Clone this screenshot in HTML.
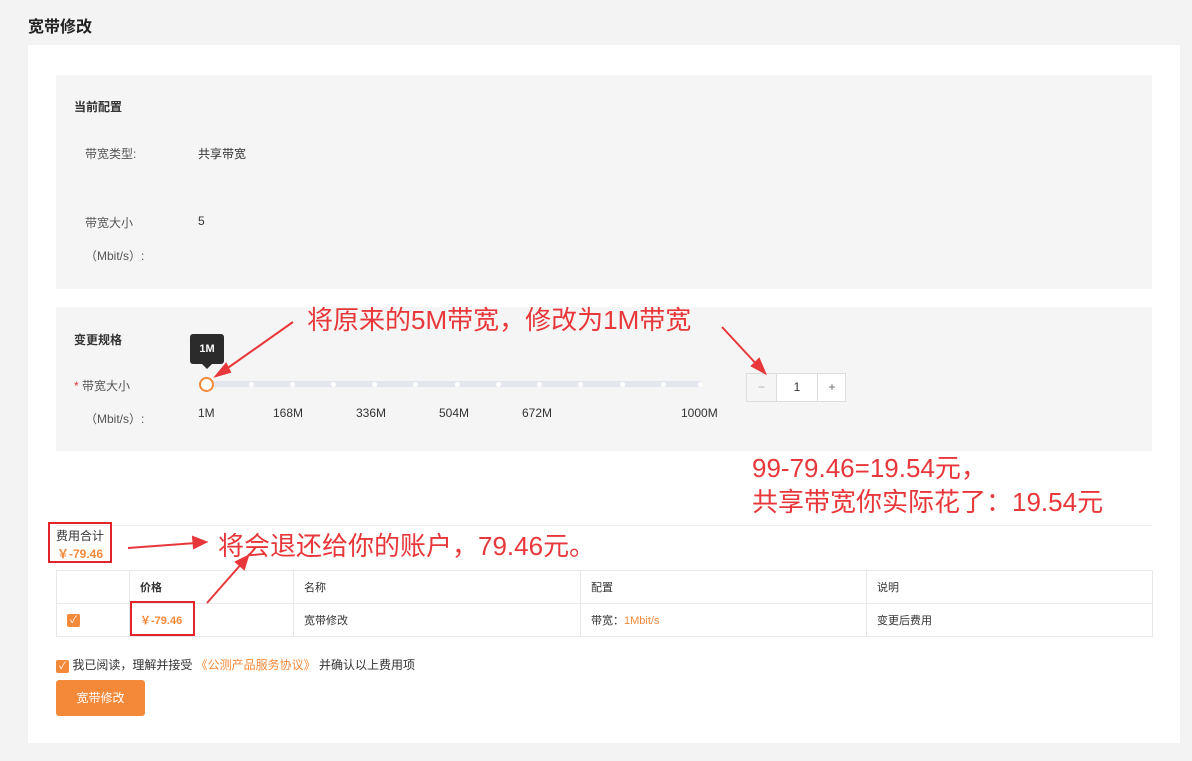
<!DOCTYPE html><html><head><meta charset="utf-8"><style>
body{margin:0;width:1192px;height:761px;background:#f3f3f3;font-family:"Liberation Sans","Noto Sans CJK SC",sans-serif;position:relative;overflow:hidden;color:#333}
.a{position:absolute;white-space:nowrap}
.card{position:absolute;left:28px;top:45px;width:1152px;height:698px;background:#fff}
.panel{position:absolute;left:56px;width:1096px;background:#f5f5f5}
.s{font-size:12px}
.red{color:#e8373a;font-size:26px}
.bx{position:absolute;border:2px solid #e0262b}
.dot{position:absolute;top:382px;width:5px;height:5px;border-radius:50%;background:#fff}
table{position:absolute;left:56px;top:570px;width:1097px;border-collapse:collapse;font-size:11px}
td{border:1px solid #e8e8e8;height:32px;padding:0 10px}
.cb{display:inline-block;width:13px;height:13px;background:#f5893a;border-radius:2px;color:#fff;font-size:10px;line-height:13px;text-align:center}
</style></head><body>
<div class="a" style="left:28px;top:13px;font-size:16px;font-weight:bold;color:#222">宽带修改</div>
<div class="card"></div>
<div class="panel" style="top:75px;height:214px"></div>
<div class="a s" style="left:74px;top:98px;font-weight:bold">当前配置</div>
<div class="a s" style="left:85px;top:145px;color:#555">带宽类型:</div>
<div class="a s" style="left:198px;top:145px">共享带宽</div>
<div class="a s" style="left:85px;top:214px;color:#555">带宽大小</div>
<div class="a s" style="left:198px;top:214px">5</div>
<div class="a s" style="left:85px;top:247px;color:#555">（Mbit/s）:</div>
<div class="panel" style="top:307px;height:144px"></div>
<div class="a s" style="left:74px;top:331px;font-weight:bold">变更规格</div>
<div class="a s" style="left:74px;top:377px;color:#555"><span style="color:#e8373a">*</span> 带宽大小</div>
<div class="a s" style="left:85px;top:410px;color:#555">（Mbit/s）:</div>
<div class="a" style="left:190px;top:334px;width:34px;height:30px;background:#2b2b2b;border-radius:3px;color:#fff;font-size:11px;font-weight:bold;text-align:center;line-height:30px">1M</div>
<div class="a" style="left:202px;top:364px;border:5px solid transparent;border-top-color:#2b2b2b;border-bottom:0"></div>
<div class="a" style="left:206px;top:381px;width:496px;height:6px;background:#e3e6ec;border-radius:3px"></div>
<div class="dot" style="left:249px"></div><div class="dot" style="left:290px"></div><div class="dot" style="left:331px"></div><div class="dot" style="left:372px"></div><div class="dot" style="left:413px"></div><div class="dot" style="left:455px"></div><div class="dot" style="left:496px"></div><div class="dot" style="left:537px"></div><div class="dot" style="left:578px"></div><div class="dot" style="left:620px"></div><div class="dot" style="left:661px"></div><div class="dot" style="left:698px"></div>
<div class="a" style="left:199px;top:377px;width:11px;height:11px;border:2px solid #f5893a;border-radius:50%;background:#fff"></div>
<div class="a s" style="left:198px;top:406px">1M</div>
<div class="a s" style="left:273px;top:406px">168M</div>
<div class="a s" style="left:356px;top:406px">336M</div>
<div class="a s" style="left:439px;top:406px">504M</div>
<div class="a s" style="left:522px;top:406px">672M</div>
<div class="a s" style="left:681px;top:406px">1000M</div>
<div class="a" style="left:746px;top:373px;width:98px;height:27px;border:1px solid #ddd;background:#fff;font-size:12px">
<div class="a" style="left:0;top:0;width:29px;height:27px;background:#f5f5f5;border-right:1px solid #ddd;text-align:center;line-height:27px;color:#aaa">−</div>
<div class="a" style="left:30px;top:0;width:40px;height:27px;text-align:center;line-height:27px">1</div>
<div class="a" style="left:70px;top:0;width:28px;height:27px;border-left:1px solid #ddd;text-align:center;line-height:27px;color:#666">+</div></div>
<div class="a red" style="left:307px;top:300px">将原来的5M带宽，修改为1M带宽</div>
<div class="a red" style="left:752px;top:448px">99-79.46=19.54元，</div>
<div class="a red" style="left:752px;top:482px">共享带宽你实际花了：19.54元</div>
<div class="a" style="left:56px;top:525px;width:1096px;height:1px;background:#ececec"></div>
<div class="a" style="left:56px;top:527px;font-size:12px">费用合计</div>
<div class="a" style="left:57px;top:545px;font-size:12px;font-weight:bold;color:#f5893a">￥-79.46</div>
<div class="bx" style="left:48px;top:522px;width:60px;height:37px"></div>
<div class="a red" style="left:218px;top:526px">将会退还给你的账户，79.46元。</div>
<table><tr><td style="width:52px"></td><td style="width:143px;font-weight:bold">价格</td><td style="width:266px">名称</td><td style="width:265px">配置</td><td>说明</td></tr>
<tr><td><span class="cb">✓</span></td><td style="color:#f5893a;font-weight:bold">￥-79.46</td><td>宽带修改</td><td>带宽：<span style="color:#f5893a">1Mbit/s</span></td><td>变更后费用</td></tr></table>
<div class="bx" style="left:130px;top:601px;width:61px;height:31px"></div>
<svg class="a" style="left:0;top:0" width="1192" height="761"><g stroke="#e8373a" stroke-width="2" fill="#e8373a">
<line x1="293" y1="322" x2="222" y2="372"/><polygon points="216,376 226,364 230,372"/>
<line x1="722" y1="327" x2="760" y2="368"/><polygon points="765,373 752,366 759,359"/>
<line x1="128" y1="548" x2="196" y2="543"/><polygon points="206,542 193,537 194,548"/>
<line x1="207" y1="603" x2="243" y2="562"/><polygon points="248,556 236,562 244,569"/></g></svg>
<div class="a" style="left:56px;top:656px;font-size:12px"><span class="cb">✓</span> 我已阅读，理解并接受 <span style="color:#f5893a">《公测产品服务协议》</span> 并确认以上费用项</div>
<div class="a" style="left:56px;top:680px;width:89px;height:36px;background:#f5893a;border-radius:3px;color:#fff;font-size:12px;text-align:center;line-height:36px">宽带修改</div>
</body></html>
